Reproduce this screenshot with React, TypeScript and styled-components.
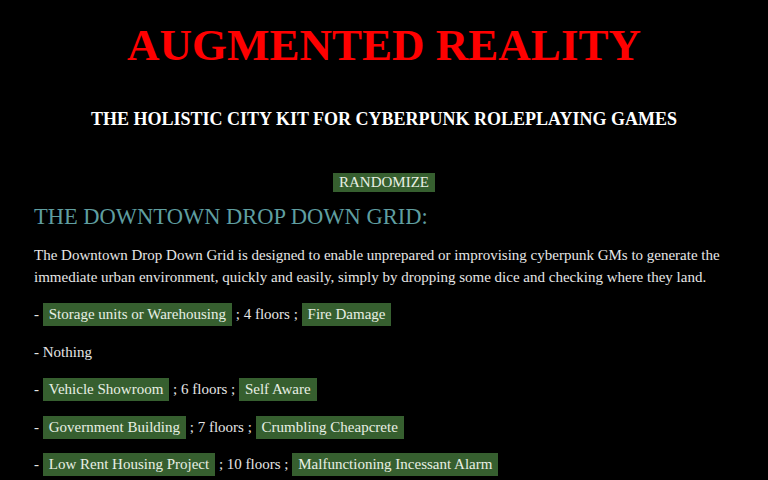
import React from "react";
import styled, { createGlobalStyle } from "styled-components";

const Global = createGlobalStyle`
  html, body { margin: 0; padding: 0; background: #000; }
  body { font-family: "Liberation Serif", "Times New Roman", serif; color: #e6e6e6; }
`;

const Page = styled.div`
  padding: 19px 34px 0;
  display: flex;
  flex-direction: column;
`;

const Title = styled.h1`
  margin: 0;
  text-align: center;
  color: #ff0000;
  font-size: 45px;
  font-weight: bold;
  line-height: 52px;
`;

const Subtitle = styled.h2`
  margin: 38px 0 0;
  text-align: center;
  color: #fff;
  font-size: 18px;
  font-weight: bold;
  line-height: 21px;
`;

const ButtonRow = styled.div`
  display: flex;
  justify-content: center;
  margin-top: 43px;
`;

const Button = styled.button`
  background: #365f2f;
  color: #e8efe4;
  border: none;
  font-family: "Liberation Serif", "Times New Roman", serif;
  font-size: 15px;
  line-height: 19px;
  padding: 0 6px;
  margin: 0;
  cursor: pointer;
`;

const Heading = styled.h3`
  margin: 12px 0 0;
  color: #5f9ea0;
  font-size: 22.5px;
  font-weight: normal;
  line-height: 25px;
`;

const Intro = styled.p`
  margin: 15px 0 0;
  font-size: 15px;
  line-height: 22px;
`;

const List = styled.div`
  margin-top: 15px;
  display: flex;
  flex-direction: column;
  gap: 14.5px;
`;

const Row = styled.div`
  font-size: 15px;
  line-height: 23px;
  display: flex;
  align-items: center;
  white-space: pre;
`;

const Tag = styled.span`
  background: #365f2f;
  color: #e8efe4;
  padding: 0 6px;
  line-height: 23px;
`;

type Entry = { kind?: string; floors?: number; trait?: string };

const entries: Entry[] = [
  { kind: "Storage units or Warehousing", floors: 4, trait: "Fire Damage" },
  {},
  { kind: "Vehicle Showroom", floors: 6, trait: "Self Aware" },
  { kind: "Government Building", floors: 7, trait: "Crumbling Cheapcrete" },
  { kind: "Low Rent Housing Project", floors: 10, trait: "Malfunctioning Incessant Alarm" },
];

export default function App() {
  return (
    <>
      <Global />
      <Page>
        <Title>AUGMENTED REALITY</Title>
        <Subtitle>THE HOLISTIC CITY KIT FOR CYBERPUNK ROLEPLAYING GAMES</Subtitle>
        <ButtonRow>
          <Button>RANDOMIZE</Button>
        </ButtonRow>
        <Heading>THE DOWNTOWN DROP DOWN GRID:</Heading>
        <Intro>
          The Downtown Drop Down Grid is designed to enable unprepared or improvising cyberpunk GMs to generate the
          immediate urban environment, quickly and easily, simply by dropping some dice and checking where they land.
        </Intro>
        <List>
          {entries.map((e, i) =>
            e.kind ? (
              <Row key={i}>
                {"- "}
                <Tag>{e.kind}</Tag>
                {` ; ${e.floors} floors ; `}
                <Tag>{e.trait}</Tag>
              </Row>
            ) : (
              <Row key={i}>- Nothing</Row>
            )
          )}
        </List>
      </Page>
    </>
  );
}
